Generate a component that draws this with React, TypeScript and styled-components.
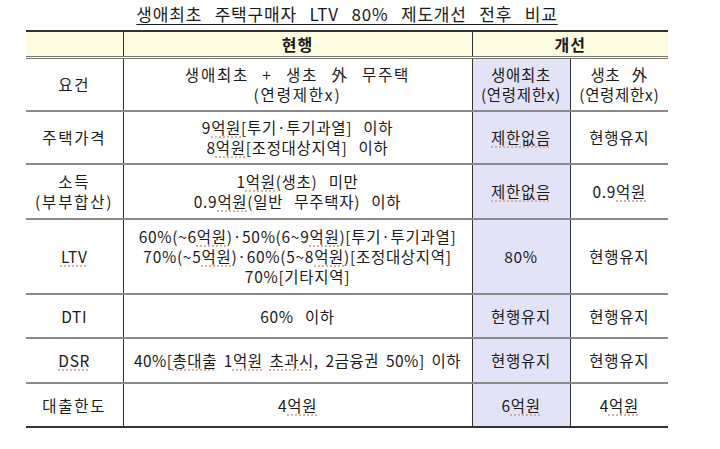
import styled, { createGlobalStyle } from 'styled-components';

const GlobalStyle = createGlobalStyle`
  body {
    margin: 0;
    background: #fff;
    font-family: "Noto Sans CJK KR", "Noto Sans", sans-serif;
    color: #1a1a1a;
  }
`;

const Page = styled.div`
  width: 720px;
  height: 449px;
  padding: 3px 0 0 26px;
  box-sizing: border-box;
`;

const Title = styled.div`
  width: 642px;
  text-align: center;
  font-size: 17px;
  line-height: 22px;
  letter-spacing: 0.8px;
  word-spacing: 8px;
  margin-bottom: 5px;
  span {
    text-decoration: underline;
    text-decoration-thickness: 1px;
    text-underline-offset: 3px;
  }
`;

const Table = styled.table`
  border-collapse: collapse;
  table-layout: fixed;
  width: 642px;
  font-size: 15.5px;
  border-top: 2px solid #333;
  border-bottom: 2px solid #333;
`;

const HeadCell = styled.th`
  background: #fdfbe0;
  font-weight: 700;
  font-size: 16px;
  letter-spacing: 1px;
  height: 23px;
  padding: 0;
  border-left: 1px solid #333;
  border-bottom: 3px double #777;
  &:first-child {
    border-left: none;
  }
`;

type Spacing = 'tight' | 'normal' | 'wide';

const spacing = {
  tight: { ls: '0.5px', ws: '3px' },
  normal: { ls: '0.7px', ws: '7px' },
  wide: { ls: '1.8px', ws: '8px' },
};

const Cell = styled.td<{ $blue?: boolean; $sp?: Spacing }>`
  text-align: center;
  vertical-align: middle;
  padding: 0;
  line-height: 20px;
  letter-spacing: ${(p) => spacing[p.$sp ?? 'normal'].ls};
  word-spacing: ${(p) => spacing[p.$sp ?? 'normal'].ws};
  white-space: nowrap;
  border-left: 1px solid #333;
  border-top: 2px solid #8a8a8a;
  background: ${(p) => (p.$blue ? '#e3e3f8' : 'transparent')};
  &:first-child {
    border-left: none;
  }
`;

const Spell = styled.span`
  text-decoration: underline dotted #d49a8a;
  text-underline-offset: 3px;
`;

type RowData = {
  h: number;
  label: React.ReactNode;
  latin?: boolean;
  now: React.ReactNode;
  first: React.ReactNode;
  other: React.ReactNode;
  sp?: Spacing;
};

const rows: RowData[] = [
  {
    h: 53,
    label: '요건',
    sp: 'wide',
    now: (
      <>
        생애최초 + 생초 外 무주택
        <br />
        (연령제한x)
      </>
    ),
    first: (
      <>
        생애최초
        <br />
        (연령제한x)
      </>
    ),
    other: (
      <>
        생초 外
        <br />
        (연령제한x)
      </>
    ),
  },
  {
    h: 53,
    label: '주택가격',
    now: (
      <>
        9<Spell>억원</Spell>[투기·투기과열] 이하
        <br />
        8<Spell>억원</Spell>[조정대상지역] 이하
      </>
    ),
    first: <Spell>제한없음</Spell>,
    other: '현행유지',
  },
  {
    h: 55,
    label: (
      <>
        소득
        <br />
        (부부합산)
      </>
    ),
    now: (
      <>
        1<Spell>억원</Spell>(생초) 미만
        <br />
        0.9<Spell>억원</Spell>(일반 무주택자) 이하
      </>
    ),
    first: <Spell>제한없음</Spell>,
    other: (
      <>
        0.9<Spell>억원</Spell>
      </>
    ),
  },
  {
    h: 75,
    label: <Spell>LTV</Spell>,
    latin: true,
    now: (
      <>
        60%(~6<Spell>억원</Spell>)·50%(6~9<Spell>억원</Spell>)[투기·투기과열]
        <br />
        70%(~5<Spell>억원</Spell>)·60%(5~8<Spell>억원</Spell>)[조정대상지역]
        <br />
        70%[기타지역]
      </>
    ),
    first: '80%',
    other: '현행유지',
  },
  {
    h: 44,
    label: 'DTI',
    latin: true,
    now: '60% 이하',
    first: '현행유지',
    other: '현행유지',
  },
  {
    h: 45,
    label: <Spell>DSR</Spell>,
    latin: true,
    sp: 'tight',
    now: (
      <>
        40%[<Spell>총대출</Spell> 1<Spell>억원</Spell> <Spell>초과시</Spell>, 2금융권 50%] 이하
      </>
    ),
    first: '현행유지',
    other: '현행유지',
  },
  {
    h: 44,
    label: '대출한도',
    now: (
      <>
        4<Spell>억원</Spell>
      </>
    ),
    first: (
      <>
        6<Spell>억원</Spell>
      </>
    ),
    other: (
      <>
        4<Spell>억원</Spell>
      </>
    ),
  },
];

export default function App() {
  return (
    <Page>
      <GlobalStyle />
      <Title>
        <span>생애최초 주택구매자 LTV 80% 제도개선 전후 비교</span>
      </Title>
      <Table>
        <colgroup>
          <col style={{ width: 97 }} />
          <col style={{ width: 349 }} />
          <col style={{ width: 98 }} />
          <col style={{ width: 98 }} />
        </colgroup>
        <thead>
          <tr>
            <HeadCell />
            <HeadCell>현행</HeadCell>
            <HeadCell colSpan={2}>개선</HeadCell>
          </tr>
        </thead>
        <tbody>
          {rows.map((r, i) => (
            <tr key={i} style={{ height: r.h }}>
              <Cell $sp={r.latin ? 'normal' : 'wide'}>{r.label}</Cell>
              <Cell $sp={r.sp}>{r.now}</Cell>
              <Cell $blue>{r.first}</Cell>
              <Cell>{r.other}</Cell>
            </tr>
          ))}
        </tbody>
      </Table>
    </Page>
  );
}
